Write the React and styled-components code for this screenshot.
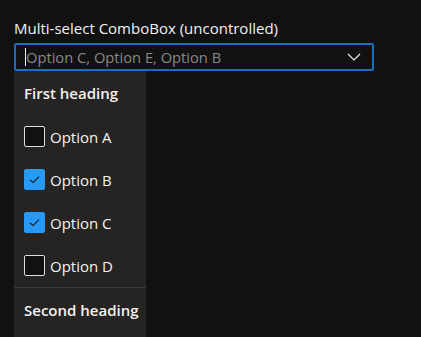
import React from "react";
import styled, { createGlobalStyle } from "styled-components";

const GlobalStyle = createGlobalStyle`
  html, body {
    margin: 0;
    padding: 0;
    background: #111111;
  }
  body {
    font-family: "Open Sans", "Noto Sans", sans-serif;
    color: #f3f2f1;
  }
`;

const Page = styled.div`
  padding: 16px 0 0 14px;
  width: 360px;
  height: 321px;
  overflow: hidden;
  display: flex;
  flex-direction: column;
`;

const Label = styled.label`
  font-size: 15px;
  line-height: 20px;
  padding: 2px 0 5px;
  color: #f3f2f1;
`;

const Field = styled.div`
  box-sizing: border-box;
  height: 28px;
  width: 360px;
  border: 2px solid #1a6ebd;
  border-radius: 2px;
  display: flex;
  align-items: center;
  padding: 0 11px 0 9px;
`;

const Caret = styled.span`
  width: 1px;
  height: 18px;
  background: #f3f2f1;
`;

const Value = styled.span`
  flex: 1;
  font-size: 14.7px;
  color: #8a8886;
  white-space: nowrap;
`;

const Chevron = styled.svg`
  width: 14px;
  height: 14px;
`;

const Menu = styled.div`
  width: 132px;
  background: #252423;
  display: flex;
  flex-direction: column;
  flex: 1;
`;

const Heading = styled.div`
  height: ${(p) => p.h}px;
  display: flex;
  align-items: center;
  padding-left: 10px;
  font-size: 15px;
  font-weight: 600;
  color: #f3f2f1;
`;

const Option = styled.div`
  height: 43px;
  display: flex;
  align-items: center;
  padding-left: 10px;
  gap: 5px;
  font-size: 15px;
  color: #f3f2f1;
`;

const Box = styled.span`
  box-sizing: border-box;
  width: 21px;
  height: 21px;
  border-radius: 2px;
  border: 1px solid ${(p) => (p.checked ? "#2899f5" : "#e1dfdd")};
  background: ${(p) => (p.checked ? "#2899f5" : "#111111")};
  display: flex;
  align-items: center;
  justify-content: center;
`;

const Divider = styled.div`
  height: 1px;
  background: #3b3a39;
`;

const Check = () => (
  <svg width="13" height="13" viewBox="0 0 13 13">
    <path d="M2 6.8 L5 9.6 L11 3.6" fill="none" stroke="#111111" strokeWidth="1.1" />
  </svg>
);

const options = [
  { label: "Option A", checked: false },
  { label: "Option B", checked: true },
  { label: "Option C", checked: true },
  { label: "Option D", checked: false },
];

export default function App() {
  return (
    <>
      <GlobalStyle />
      <Page>
        <Label>Multi-select ComboBox (uncontrolled)</Label>
        <Field>
          <Caret />
          <Value>Option C, Option E, Option B</Value>
          <Chevron viewBox="0 0 14 14">
            <path d="M1 4 L7 10 L13 4" fill="none" stroke="#f3f2f1" strokeWidth="1.1" />
          </Chevron>
        </Field>
        <Menu>
          <Heading h={44}>First heading</Heading>
          {options.map((o) => (
            <Option key={o.label}>
              <Box checked={o.checked}>{o.checked && <Check />}</Box>
              {o.label}
            </Option>
          ))}
          <Divider />
          <Heading h={44}>Second heading</Heading>
        </Menu>
      </Page>
    </>
  );
}
